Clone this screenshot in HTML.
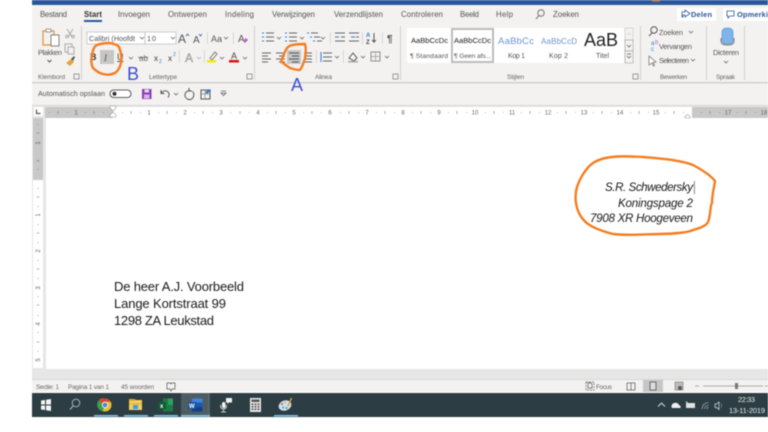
<!DOCTYPE html>
<html><head><meta charset="utf-8"><title>Word</title>
<style>
html,body{margin:0;padding:0;background:#fff;width:768px;height:432px;overflow:hidden}
svg{display:block;filter:blur(.5px)}
text{font-family:"Liberation Sans",sans-serif;font-size:7.4px;fill:#555}
.t{font-size:7.8px;fill:#555}
.l{font-size:6.4px;fill:#666}
.r{font-size:6px;fill:#666;text-anchor:middle}
.d{font-size:13px;fill:#1a1a1a}
.i{font-size:11.6px;font-style:italic;fill:#1a1a1a}
.ic{fill:none;stroke:#555;stroke-width:1}
.o{fill:none;stroke:#f47d20;stroke-linejoin:round;stroke-linecap:round}
</style></head><body>
<svg width="768" height="432" viewBox="0 0 768 432" xmlns="http://www.w3.org/2000/svg">
<!-- window base -->
<rect x="32" y="0" width="736" height="392" fill="#f3f2f1"/>
<rect x="32" y="0" width="736" height="5" fill="#2b579a"/>
<rect x="652" y="0" width="8" height="2" fill="#9a6a55"/>
<!-- tabs -->
<text class="t" x="40" y="17" textLength="27">Bestand</text>
<text class="t" x="84" y="17" textLength="18" style="fill:#333;font-weight:bold">Start</text>
<rect x="84" y="20" width="18" height="2" fill="#2b579a"/>
<text class="t" x="118" y="17" textLength="32">Invoegen</text>
<text class="t" x="168" y="17" textLength="39">Ontwerpen</text>
<text class="t" x="225" y="17" textLength="29">Indeling</text>
<text class="t" x="272" y="17" textLength="43">Verwijzingen</text>
<text class="t" x="334" y="17" textLength="49">Verzendlijsten</text>
<text class="t" x="401" y="17" textLength="42">Controleren</text>
<text class="t" x="460" y="17" textLength="19">Beeld</text>
<text class="t" x="496" y="17" textLength="17">Help</text>
<circle cx="541" cy="13" r="3.2" class="ic" style="stroke:#777"/><path d="M539 15.5L536 19" class="ic" style="stroke:#777"/>
<text class="t" x="553" y="17" textLength="26">Zoeken</text>
<rect x="677" y="8" width="39" height="13" fill="#fff"/>
<path d="M682 12h3v-2l5 3.500-5 3.500v-2h-2v2h-1z" fill="none" stroke="#2b579a" stroke-width=".8"/>
<text class="t" x="691" y="17" textLength="21" style="fill:#2b579a;font-weight:bold;font-size:7.4px">Delen</text>
<rect x="723" y="8" width="45" height="13" fill="#fff"/>
<path d="M727 11h7v5h-4l-2 2v-2h-1z" fill="none" stroke="#2b579a" stroke-width=".8"/>
<text class="t" x="737" y="17" textLength="31" style="fill:#2b579a;font-weight:bold;font-size:7.4px">Opmerki</text>
<!-- ribbon separators -->
<g fill="#d2d0ce">
<rect x="81" y="26" width="1" height="54"/><rect x="254" y="26" width="1" height="54"/>
<rect x="400" y="26" width="1" height="54"/><rect x="640" y="26" width="1" height="54"/>
<rect x="706" y="26" width="1" height="54"/><rect x="744" y="26" width="1" height="54"/>
<rect x="32" y="82" width="736" height="1.500"/>
</g>
<!-- clipboard -->
<rect x="43" y="31" width="11" height="14" fill="none" stroke="#e0993a" stroke-width="1.300"/>
<rect x="46" y="29" width="5" height="3" fill="#fff" stroke="#777" stroke-width=".7"/>
<rect x="51" y="35" width="8" height="11" fill="#fff" stroke="#666" stroke-width=".8"/>
<text x="38" y="55" textLength="24">Plakken</text>
<path d="M47.500 60l2 2 2-2" class="ic"/>
<path d="M67 29l5 8M73 29l-5 8" stroke="#aaa" fill="none"/>
<circle cx="67" cy="36.500" r="1.300" class="ic" style="stroke:#aaa"/><circle cx="73" cy="36.500" r="1.300" class="ic" style="stroke:#aaa"/>
<rect x="65" y="44" width="7" height="8" fill="#f3f2f1" stroke="#aaa"/><rect x="68" y="47" width="6" height="7" fill="#f3f2f1" stroke="#aaa"/>
<path d="M66 63l5-4 3 3-4 4z" fill="#e8a33c"/><path d="M71 59l3-3 1 1-2 4z" fill="#555"/>
<text class="l" x="38" y="79" textLength="27">Klembord</text>
<rect x="74" y="74" width="5" height="5" fill="none" stroke="#777" stroke-width=".7"/>
<!-- font -->
<rect x="87" y="32" width="58" height="12" fill="#fff" stroke="#bbb" stroke-width=".7"/>
<text x="89" y="41" textLength="46" style="font-size:7.2px">Calibri (Hoofdt</text>
<path d="M140 37l2 2 2-2" class="ic" style="stroke-width:.7"/>
<rect x="145" y="32" width="31" height="12" fill="#fff" stroke="#bbb" stroke-width=".7"/>
<text x="147" y="41" textLength="9" style="font-size:7.4px">10</text>
<path d="M171 37l2 2 2-2" class="ic" style="stroke-width:.7"/>
<text x="178" y="43" style="font-size:12px">A</text><path d="M186 36l1.500-2 1.500 2" stroke="#2b579a" fill="none" stroke-width=".7"/>
<text x="193" y="43" style="font-size:10px">A</text><path d="M199 34l1.500 2 1.500-2" stroke="#2b579a" fill="none" stroke-width=".7"/>
<rect x="207" y="32" width=".7" height="12" fill="#ccc"/>
<text x="211" y="42" style="font-size:9px">Aa</text><path d="M224 37l2 2 2-2" class="ic" style="stroke-width:.7"/>
<rect x="233" y="32" width=".7" height="12" fill="#ccc"/>
<text x="238" y="42" style="font-size:10px">A</text><path d="M243 41l3-3 2 2-3 3z" fill="#b562c0"/>
<!-- B I U row -->
<text x="90" y="60" style="font-size:9px;font-weight:bold;fill:#333">B</text>
<rect x="100" y="50" width="14" height="14" fill="#c6c6c6"/>
<text x="104" y="61" style="font-size:9px;font-style:italic;font-family:'Liberation Serif',serif;fill:#555">I</text>
<text x="117" y="60" style="font-size:9px;text-decoration:underline;fill:#444">U</text>
<path d="M129 57l2 2 2-2" class="ic" style="stroke-width:.7"/>
<text x="139" y="61" style="font-size:8px;fill:#666">ab</text><rect x="138" y="57" width="10" height=".8" fill="#666"/>
<text x="154" y="61" style="font-size:8px;fill:#333">x</text><text x="159" y="63" style="font-size:5px;fill:#2b7cd3">2</text>
<text x="168" y="61" style="font-size:8px;fill:#333">x</text><text x="173" y="56" style="font-size:5px;fill:#2b7cd3">2</text>
<rect x="179" y="50" width=".7" height="13" fill="#ccc"/>
<text x="185" y="62" style="font-size:12px;fill:#bbb;stroke:#999;stroke-width:.4">A</text>
<path d="M197 57l2 2 2-2" class="ic" style="stroke-width:.7;stroke:#aaa"/>
<rect x="204" y="50" width=".7" height="13" fill="#ccc"/>
<path d="M210 58l5-6 2 2-5 6z" fill="none" stroke="#666" stroke-width=".8"/>
<rect x="207" y="60" width="9" height="2.500" fill="#f6e80c"/>
<path d="M220 57l2 2 2-2" class="ic" style="stroke-width:.7"/>
<text x="231" y="59" style="font-size:9px;fill:#444">A</text>
<rect x="229" y="60" width="10" height="2.500" fill="#e01010"/>
<path d="M243 57l2 2 2-2" class="ic" style="stroke-width:.7"/>
<text class="l" x="149" y="79" textLength="28">Lettertype</text>
<rect x="247" y="74" width="5" height="5" fill="none" stroke="#777" stroke-width=".7"/>
<!-- paragraph row 1 -->
<g stroke="#2b7cd3" stroke-width="1" fill="none">
<path d="M262 33h2M262 37h2M262 41h2"/>
<path d="M285 33h2M285 37h2M285 41h2"/>
<path d="M307 33h2M310 37h2M313 41h2"/>
<path d="M335 37h4"/>
<path d="M351 37h4"/>
</g>
<path d="M266 33h8M266 37h8M266 41h8M289 33h8M289 37h8M289 41h8M311 33h7M314 37h6M317 41h5M335 33h10M341 37h4M335 41h10M349 33h10M356 37h3M349 41h10" stroke="#666" fill="none" stroke-width=".9"/>
<path d="M277 37l2 2 2-2M300 37l2 2 2-2M321 37l2 2 2-2" class="ic" style="stroke-width:.7"/>
<text x="366" y="37" style="font-size:6px;fill:#2b7cd3;font-weight:bold">A</text>
<text x="366" y="44" style="font-size:6px;fill:#444;font-weight:bold">Z</text>
<path d="M374 33v9l-2-2M374 42l2-2" class="ic"/>
<text x="387" y="42" style="font-size:10px;font-weight:bold;fill:#555">¶</text>
<rect x="330" y="32" width=".7" height="12" fill="#ccc"/><rect x="362" y="32" width=".7" height="12" fill="#ccc"/><rect x="382" y="32" width=".7" height="12" fill="#ccc"/>
<!-- paragraph row 2 -->
<rect x="287" y="50" width="14" height="14" fill="#c6c6c6"/>
<path d="M262 53h9M262 56h6M262 59h9M262 62h6" stroke="#666" fill="none" stroke-width=".9"/>
<path d="M276 53h9M279 56h6M276 59h9M279 62h6" stroke="#666" fill="none" stroke-width=".9"/>
<path d="M289 53h10M292 56h7M289 59h10M292 62h7" stroke="#555" fill="none" stroke-width=".9"/>
<path d="M304 53h8M304 56h8M304 59h8M304 62h8" stroke="#666" fill="none" stroke-width=".9"/>
<rect x="316" y="50" width=".7" height="13" fill="#ccc"/>
<path d="M323 53h9M323 57h9M323 61h9" stroke="#666" stroke-width=".9" fill="none"/><path d="M321 52v10" stroke="#2b7cd3" fill="none"/>
<path d="M335 56l2 2 2-2" class="ic" style="stroke-width:.7"/>
<rect x="343" y="50" width=".7" height="13" fill="#ccc"/>
<path d="M349 58l4-5 4 5-3 3z" class="ic"/><rect x="348" y="61" width="10" height="1.500" fill="#aaa"/>
<path d="M361 56l2 2 2-2" class="ic" style="stroke-width:.7"/>
<rect x="371" y="52" width="9" height="9" fill="none" stroke="#777" stroke-width=".8"/><path d="M375.500 52v9M371 56.500h9" stroke="#999" stroke-width=".7"/>
<path d="M385 56l2 2 2-2" class="ic" style="stroke-width:.7"/>
<text class="l" x="315" y="79" textLength="17">Alinea</text>
<rect x="393" y="74" width="5" height="5" fill="none" stroke="#777" stroke-width=".7"/>
<!-- styles -->
<rect x="407" y="28" width="217" height="35" fill="#fff"/>
<rect x="452" y="29" width="41" height="33" fill="#fff" stroke="#bdbdbd" stroke-width="2"/>
<text x="411" y="43" textLength="37" style="font-size:7.600px;fill:#222">AaBbCcDc</text>
<text x="454" y="43" textLength="37" style="font-size:7.600px;fill:#222">AaBbCcDc</text>
<text x="498" y="44" textLength="36" style="font-size:9.500px;fill:#6a94cf">AaBbCc</text>
<text x="541" y="44" textLength="36" style="font-size:8px;fill:#6a94cf">AaBbCcD</text>
<text x="584" y="46" textLength="34" style="font-size:18px;fill:#222">AaB</text>
<text x="410" y="58" textLength="38" style="font-size:6.800px">¶ Standaard</text>
<text x="454" y="58" textLength="37" style="font-size:6.600px">¶ Geen afs...</text>
<text x="508" y="58" textLength="17" style="font-size:7px">Kop 1</text>
<text x="549" y="58" textLength="19" style="font-size:7px">Kop 2</text>
<text x="596" y="58" textLength="13" style="font-size:7px">Titel</text>
<rect x="625" y="28" width="8" height="12" fill="#f3f2f1" stroke="#ccc" stroke-width=".7"/>
<rect x="625" y="40" width="8" height="11" fill="#f3f2f1" stroke="#aaa" stroke-width=".7"/>
<rect x="625" y="51" width="8" height="12" fill="#f3f2f1" stroke="#aaa" stroke-width=".7"/>
<path d="M627 35l2-2 2 2" fill="none" stroke="#ccc" stroke-width=".7"/>
<path d="M627 45l2 2 2-2" class="ic" style="stroke-width:.7"/>
<path d="M627 54h4M627 56l2 2 2-2" class="ic" style="stroke-width:.7"/>
<text class="l" x="507" y="79" textLength="17">Stijlen</text>
<rect x="633" y="74" width="5" height="5" fill="none" stroke="#777" stroke-width=".7"/>
<!-- edit -->
<circle cx="654" cy="30" r="3.200" class="ic"/><path d="M652 33l-3 3" class="ic"/>
<text x="659" y="35" textLength="24">Zoeken</text>
<path d="M689 31l2 2 2-2" class="ic" style="stroke-width:.7"/>
<text x="651" y="45" style="font-size:6px;fill:#2b7cd3">a</text><text x="651" y="51" style="font-size:6px;fill:#2b7cd3">c</text><text x="655" y="44" style="font-size:6px;fill:#b562c0">b</text>
<text x="659" y="49" textLength="33">Vervangen</text>
<path d="M649 56l7 6-3 .5 1.500 3-1 .5-1.500-3-3 2z" fill="#fff" stroke="#666" stroke-width=".7"/>
<text x="659" y="63" textLength="30">Selecteren</text>
<path d="M691 59l2 2 2-2" class="ic" style="stroke-width:.7"/>
<text class="l" x="660" y="79" textLength="27">Bewerken</text>
<!-- dictate -->
<rect x="722" y="28" width="11" height="16" rx="4" fill="#7eb4ea" stroke="#4a8ad0" stroke-width=".6"/>
<path d="M721 38v3q0 4 6.500 4q6.500 0 6.500-4v-3" fill="none" stroke="#777"/>
<text x="713" y="55" textLength="26">Dicteren</text>
<path d="M724 61l2 2 2-2" class="ic" style="stroke-width:.7"/>
<text class="l" x="716" y="79" textLength="19">Spraak</text>
<!-- QAT -->
<text x="38" y="96" textLength="67" style="font-size:7.200px;fill:#555">Automatisch opslaan</text>
<rect x="110" y="90" width="21" height="7.500" rx="3.700" fill="#fff" stroke="#333" stroke-width=".8"/>
<circle cx="114.500" cy="93.700" r="2" fill="#333"/>
<rect x="142" y="89" width="9.500" height="10" fill="#8c3fb0"/><rect x="144.500" y="89.500" width="4.500" height="3" fill="#e9d7f0"/><rect x="144" y="94.500" width="5.500" height="4" fill="#d9b7e6"/>
<path d="M161 90v3.500h3.500M161.500 93q3-3.500 6-1.500q3 2.500 .5 6" fill="none" stroke="#555"/>
<path d="M174 93l2 2 2-2" class="ic" style="stroke-width:.7"/>
<path d="M190 90.500q-4.500 .5-5 4t3.500 5q4 .5 5-3t-1-5M189 88v3h3" fill="none" stroke="#555"/>
<rect x="201" y="90" width="9" height="9" fill="none" stroke="#555"/><path d="M205 92l5-3 1 1.500-4 3.500z" fill="#2b7cd3"/><path d="M201 94h9M205 90v9" stroke="#888" stroke-width=".7"/>
<path d="M221 91h5M221 93l2.500 2.500 2.500-2.500z" fill="none" stroke="#666" stroke-width=".8"/>
<!-- ruler area and doc -->
<rect x="32" y="105" width="736" height="275" fill="#e6e6e6"/>
<rect x="32" y="105" width="736" height="1" fill="#d6d6d6"/>
<rect x="46" y="118" width="722" height="251" fill="#fff"/>
<rect x="45" y="107" width="68" height="11" fill="#c8c8c8"/>
<rect x="113" y="107" width="579" height="11" fill="#fff"/>
<rect x="692" y="107" width="76" height="11" fill="#c8c8c8"/>
<rect x="34" y="107" width="9" height="9" fill="#fff"/>
<path d="M36.500 109.500v4h4" fill="none" stroke="#555" stroke-width="1.200"/>
<rect x="33" y="118" width="10" height="62" fill="#c8c8c8"/>
<rect x="33" y="180" width="10" height="188" fill="#fff"/>
<!-- ruler numbers -->
<text class="r" x="76" y="114.500">1</text>
<text class="r" x="149" y="114.500">1</text><text class="r" x="185" y="114.500">2</text><text class="r" x="221" y="114.500">3</text>
<text class="r" x="258" y="114.500">4</text><text class="r" x="294" y="114.500">5</text><text class="r" x="330" y="114.500">6</text>
<text class="r" x="367" y="114.500">7</text><text class="r" x="403" y="114.500">8</text><text class="r" x="439" y="114.500">9</text>
<text class="r" x="475" y="114.500">10</text><text class="r" x="512" y="114.500">11</text><text class="r" x="548" y="114.500">12</text>
<text class="r" x="584" y="114.500">13</text><text class="r" x="620" y="114.500">14</text><text class="r" x="656" y="114.500">15</text>
<text class="r" x="728" y="114.500">17</text><text class="r" x="764" y="114.500">18</text>
<!-- ruler ticks -->
<path d="M49 112.500h1M58 111v3M67 112.500h1M85 112.500h1M94 111v3M103 112.500h1M122 112.500h1M131 111v3M140 112.500h1M158 112.500h1M167 111v3M176 112.500h1M194 112.500h1M203 111v3M212 112.500h1M230 112.500h1M240 111v3M249 112.500h1M267 112.500h1M276 111v3M285 112.500h1M303 112.500h1M312 111v3M321 112.500h1M340 112.500h1M349 111v3M358 112.500h1M376 112.500h1M385 111v3M394 112.500h1M412 112.500h1M421 111v3M430 112.500h1M448 112.500h1M457 111v3M466 112.500h1M485 112.500h1M494 111v3M503 112.500h1M521 112.500h1M530 111v3M539 112.500h1M557 112.500h1M566 111v3M575 112.500h1M593 112.500h1M602 111v3M611 112.500h1M630 112.500h1M639 111v3M648 112.500h1M665 112.500h1M674 111v3M683 112.500h1M701 112.500h1M710 111v3M719 112.500h1M737 112.500h1M746 111v3M755 112.500h1" stroke="#777" stroke-width=".6" fill="none"/>
<!-- vertical ruler -->
<g stroke="#777" stroke-width=".6" fill="none">
<path d="M38 124v1M36.500 133h3M38 142h.5M38 160v1M36.500 161h3M38 169v1M38 188v1M36.500 197h3M38 206v1M38 224v1M36.500 233h3M38 242v1M38 260v1M36.500 269h3M38 278v1M38 296v1M36.500 305h3M38 315v1M38 332v1M36.500 342h3M38 351v1"/>
</g>
<text class="r" transform="translate(40,143) rotate(-90)">1</text>
<text class="r" transform="translate(40,215) rotate(-90)">1</text>
<text class="r" transform="translate(40,251) rotate(-90)">2</text>
<text class="r" transform="translate(40,288) rotate(-90)">3</text>
<text class="r" transform="translate(40,324) rotate(-90)">4</text>
<text class="r" transform="translate(40,360) rotate(-90)">5</text>
<!-- indent markers -->
<path d="M110 106h6v2l-3 3-3-3z" fill="#fff" stroke="#999" stroke-width=".6"/>
<path d="M110 117v-2l3-3 3 3v2z" fill="#fff" stroke="#999" stroke-width=".6"/>
<path d="M692 118v-1.500l2.500-2 2.500 2v1.500z" transform="translate(-7,0)" fill="#fff" stroke="#999" stroke-width=".6"/>
<!-- document text -->
<text class="d" x="114" y="291" textLength="130">De heer A.J. Voorbeeld</text>
<text class="d" x="114" y="308" textLength="112">Lange Kortstraat 99</text>
<text class="d" x="114" y="325" textLength="100">1298 ZA Leukstad</text>
<text class="i" x="605" y="191" textLength="88">S.R. Schwedersky</text>
<rect x="694" y="181" width=".7" height="13" fill="#555"/>
<text class="i" x="618" y="207" textLength="75">Koningspage 2</text>
<text class="i" x="590" y="222" textLength="103">7908 XR Hoogeveen</text>
<!-- orange hand circles -->
<path class="o" stroke-width="2.400" d="M715 181C712 177 706 172 693 165C680 160 665 159 643 157C625 156 605 155 593 163C586 168 580 178 577 187C574 197 576 208 580 215C584 222 590 228 613 234C630 236 650 234 660 234C675 234 690 232 693 230C700 228 706 226 708 222C711 215 710 205 712 203C712 195 714 188 715 181Z"/>
<path class="o" stroke-width="2.400" d="M92 55C93 50 94 46 97 45C102 43 106 43 110 43C114 44 118 45 119 47C121 52 122 58 121 63C120 67 118 71 115 73C111 75 107 75 103 74C99 73 96 71 93 68C91 64 91 59 92 55Z"/>
<path class="o" stroke-width="2.400" d="M281 62C283 56 285 51 287 48C289 46 291 45 293 45C297 44 301 44 305 44C306 48 306 53 305 58C304 62 302 67 300 70C297 70 293 69 290 68C287 66 284 64 282 62"/>
<text x="127" y="80" style="font-size:18px;fill:#3f4fd6">B</text>
<text x="291" y="91" style="font-size:18px;fill:#3f4fd6">A</text>
<!-- status bar -->
<rect x="32" y="379" width="736" height="1" fill="#d6d6d6"/>
<rect x="32" y="380" width="736" height="12" fill="#f3f2f1"/>
<text x="36" y="389" textLength="23" style="font-size:6.400px;fill:#666">Sectie: 1</text>
<text x="68" y="389" textLength="41" style="font-size:6.400px;fill:#666">Pagina 1 van 1</text>
<text x="121" y="389" textLength="33" style="font-size:6.400px;fill:#666">45 woorden</text>
<path d="M167 383h3.500l.5 1 .5-1h3.500v6h-3l-1 2-1-2h-3z" fill="none" stroke="#555" stroke-width=".7"/>
<rect x="586" y="382" width="8" height="8" fill="none" stroke="#666" stroke-width=".7" stroke-dasharray="2 1"/>
<path d="M588 383h3l1 1v4h-4z" fill="none" stroke="#555" stroke-width=".7"/>
<text x="596" y="389" textLength="16" style="font-size:6.400px;fill:#666">Focus</text>
<rect x="627" y="383" width="8" height="7" fill="none" stroke="#666" stroke-width=".8"/><path d="M631 383v7" stroke="#666" stroke-width=".8"/>
<rect x="643" y="380" width="20" height="12" fill="#c6c6c6"/>
<rect x="650" y="382" width="6" height="8" fill="#dcdcdc" stroke="#555" stroke-width=".8"/>
<rect x="675" y="382" width="8" height="8" fill="#bbb" stroke="#777" stroke-width=".6"/><circle cx="680" cy="388" r="2" fill="#555"/>
<path d="M695 386h4M703 386h60M765 386h3" stroke="#aaa" fill="none"/>
<rect x="735" y="383" width="3" height="6" fill="#777"/>
<!-- taskbar -->
<rect x="32" y="393" width="736" height="24" fill="#2c3e43"/>
<rect x="181" y="393" width="29" height="24" fill="#4d5e63"/>
<rect x="208" y="393" width="1" height="24" fill="#5b6b70"/>
<g fill="#7cc4f0">
<rect x="94" y="415" width="24" height="1.500"/><rect x="124" y="415" width="24" height="1.500"/>
<rect x="154" y="415" width="24" height="1.500"/><rect x="181" y="415" width="29" height="1.500"/>
<rect x="274" y="415" width="24" height="1.500"/>
</g>
<!-- windows logo -->
<path d="M41 400.500l4-.5v4.500h-4zM46 399.800l5-.8v5.500h-5zM41 405.500h4v4.500l-4-.5zM46 405.500h5v5.500l-5-.8z" fill="#f5f5f5"/>
<!-- search -->
<circle cx="76" cy="403" r="3.800" fill="none" stroke="#b5bcbe" stroke-width=".9"/><path d="M73 406l-3 3.500" stroke="#b5bcbe" fill="none"/>
<!-- chrome -->
<circle cx="105" cy="405" r="6.500" fill="#e8c02c"/>
<path d="M105 398.500a6.500 6.500 0 0 1 5.700 3.300h-5.700a3.300 3.300 0 0 0-3.200 2.200l-2.700-4.400a6.500 6.500 0 0 1 5.900-1.100z" fill="#d8442f"/>
<path d="M99.100 400a6.500 6.500 0 0 0 3.300 11l2.700-4.600-3.200-2.400z" fill="#3e9e4a"/>
<circle cx="105" cy="405" r="2.800" fill="#4b86d8" stroke="#fff" stroke-width=".8"/>
<!-- folder -->
<rect x="129" y="400" width="13" height="10" fill="#f4cf5c"/><rect x="129" y="399" width="6" height="2" fill="#e0a92e"/>
<rect x="133" y="405" width="5" height="4" fill="#3aa0e0"/><rect x="129" y="403" width="13" height="1.500" fill="#e9b53d"/>
<!-- excel -->
<rect x="163" y="398.500" width="10" height="13" fill="#1e7a45"/><rect x="168" y="398.500" width="5" height="6.500" fill="#2ca05f"/>
<rect x="158" y="402" width="8" height="7" fill="#0f5e33"/><text x="160" y="408" style="font-size:6px;font-weight:bold;fill:#fff">x</text>
<!-- word -->
<rect x="192" y="398.500" width="10.500" height="13" fill="#1f58b0"/><rect x="192" y="398.500" width="10.500" height="4" fill="#3d85df"/><rect x="192" y="407" width="10.500" height="4.500" fill="#123f8c"/>
<rect x="188" y="402" width="8" height="7" fill="#1a4fa5"/><text x="189" y="408" style="font-size:6px;font-weight:bold;fill:#fff">W</text>
<!-- speech -->
<rect x="222" y="402" width="3.500" height="6" rx="1.700" fill="#f2f2f2"/><path d="M220.500 405q0 4 3 4t3-4M223.500 409v2.500M221 412h5" stroke="#f2f2f2" fill="none" stroke-width=".8"/>
<path d="M226 398h6v4.500h-3l-1.500 1.500v-1.500h-1.500z" fill="#f2f2f2"/>
<!-- calc -->
<rect x="250" y="398" width="11" height="14" fill="#e8e8e8"/><rect x="251.500" y="399.500" width="8" height="2.500" fill="#555"/>
<g fill="#555"><rect x="251.500" y="403.500" width="2" height="1.500"/><rect x="254.500" y="403.500" width="2" height="1.500"/><rect x="257.500" y="403.500" width="2" height="1.500"/><rect x="251.500" y="406" width="2" height="1.500"/><rect x="254.500" y="406" width="2" height="1.500"/><rect x="257.500" y="406" width="2" height="1.500"/><rect x="251.500" y="408.500" width="2" height="1.500"/><rect x="254.500" y="408.500" width="2" height="1.500"/><rect x="257.500" y="408.500" width="2" height="1.500"/></g>
<!-- paint -->
<ellipse cx="285" cy="405.500" rx="6.500" ry="5" fill="#cfe0ee" transform="rotate(-20 285 405.500)"/>
<circle cx="282" cy="404" r="1" fill="#d94f3c"/><circle cx="285" cy="402.500" r="1" fill="#e9b53d"/><circle cx="283" cy="407.500" r="1" fill="#3aa0e0"/><circle cx="286.500" cy="408" r="1" fill="#4aa050"/>
<path d="M288 406l3.500-8" stroke="#d99a3c" stroke-width="1.500" fill="none"/>
<!-- tray -->
<path d="M658 406.500l3.500-3.500 3.500 3.500" fill="none" stroke="#dfe3e4" stroke-width=".9"/>
<path d="M672 408a3 3 0 0 1 .5-4a4 4 0 0 1 6.500 1a2.500 2.500 0 0 1 1.500 3z" fill="#f0f0f0"/>
<rect x="686" y="403" width="9" height="5" fill="#dfe3e4"/><path d="M686 401.500l1.500 1.500" stroke="#dfe3e4" fill="none"/>
<path d="M702 409q.5-6 6.500-6.500M704.500 409q.5-3.500 4-4M707 409q0-1.500 1.500-2" fill="none" stroke="#97a1a4" stroke-width=".8"/>
<path d="M715 404h1.500l2.500-2v7.500l-2.500-2h-1.500z" fill="none" stroke="#dfe3e4" stroke-width=".7"/><path d="M721 403.500q1.500 2 0 4" fill="none" stroke="#97a1a4" stroke-width=".6"/>
<text x="738" y="402" textLength="17" style="font-size:7.400px;fill:#e8ecec">22:33</text>
<text x="729" y="413" textLength="36" style="font-size:7.400px;fill:#e8ecec">13-11-2019</text>
</svg>
</body></html>
